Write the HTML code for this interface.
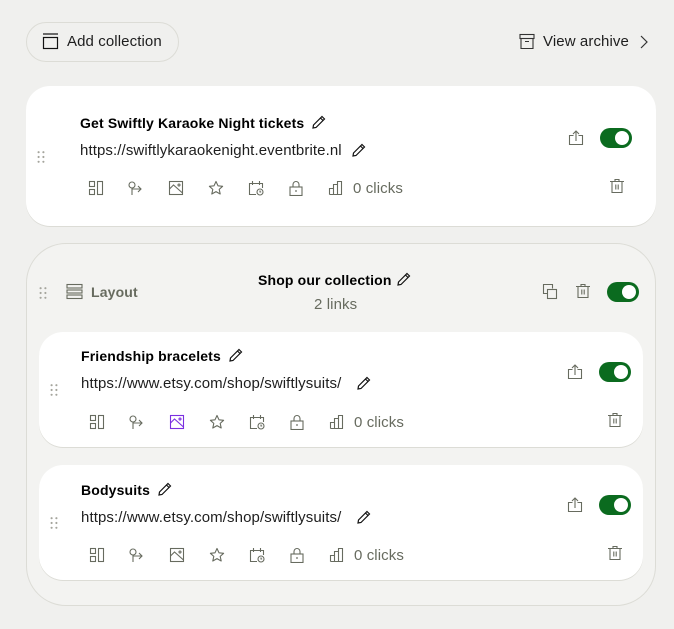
<!DOCTYPE html>
<html><head><meta charset="utf-8"><style>
*{margin:0;padding:0;box-sizing:border-box}
body{width:674px;height:629px;background:#f0f0ee;font-family:"Liberation Sans",sans-serif;position:relative;overflow:hidden;color:#000}
.a{position:absolute}
.card{position:absolute;background:#fff;border-radius:24px;box-shadow:0 1px 0 #dcdcd6}
.t{position:absolute;font-weight:bold;font-size:14px;white-space:nowrap;line-height:16px;letter-spacing:0.15px}
.u{position:absolute;font-size:15px;white-space:nowrap;line-height:16px;color:#1e1e1e;letter-spacing:0.1px}
.g{color:#676b5f}
svg.i{position:absolute;overflow:visible}
.tog{position:absolute;width:32px;height:20px;border-radius:10px;background:#0b6b1f}
.tog:after{content:"";position:absolute;right:3px;top:3px;width:14px;height:14px;border-radius:7px;background:#fff}
</style></head><body>
<svg width="0" height="0" style="position:absolute">
<defs>
<symbol id="dots" viewBox="0 0 6 10"><g fill="#a5a59d"><circle cx="1" cy="1" r=".9"/><circle cx="5" cy="1" r=".9"/><circle cx="1" cy="5" r=".9"/><circle cx="5" cy="5" r=".9"/><circle cx="1" cy="9" r=".9"/><circle cx="5" cy="9" r=".9"/></g></symbol>
<symbol id="pen" viewBox="0 0 16 16"><path d="M11 2.5l2.5 2.5L5 13.5 2 14l.5-3z M9.5 4l2.5 2.5" fill="none" stroke="#111" stroke-width="1.2"/></symbol>
<symbol id="lay" viewBox="0 0 16 16"><g fill="none" stroke="#676b5f" stroke-width="1.1"><rect x="1.5" y="1.5" width="5" height="5"/><rect x="1.5" y="9.5" width="5" height="5"/><rect x="9.5" y="1.5" width="5" height="13"/></g></symbol>
<symbol id="red" viewBox="0 0 16 16"><g fill="none" stroke="#676b5f" stroke-width="1.1"><circle cx="5" cy="5" r="3"/><path d="M5 8v7M5 9h9M11 6l3 3-3 3"/></g></symbol>
<symbol id="img" viewBox="0 0 16 16"><g fill="none" stroke="currentColor" stroke-width="1.1"><rect x="1.5" y="1.5" width="13" height="13"/><path d="M1.5 9l4-4 9 8"/><circle cx="11" cy="5" r="1"/></g></symbol>
<symbol id="star" viewBox="0 0 16 16"><path d="M8 1.5l2 4.3 4.6.5-3.4 3.1 1 4.6L8 11.6 3.8 14l1-4.6L1.4 6.3 6 5.8z" fill="none" stroke="#676b5f" stroke-width="1.1" stroke-linejoin="round"/></symbol>
<symbol id="cal" viewBox="0 0 16 16"><g fill="none" stroke="#676b5f" stroke-width="1.1"><path d="M8 14.5H1.5v-11h13V8M4.5 1v4M11.5 1v4"/><circle cx="12" cy="12" r="3"/><path d="M12 10.5V12h1.2"/></g></symbol>
<symbol id="lock" viewBox="0 0 16 16"><g fill="none" stroke="#676b5f" stroke-width="1.1"><rect x="2" y="7" width="12" height="8.5"/><path d="M5 7V4.5a3 3 0 016 0V7"/></g><circle cx="8" cy="11" r=".9" fill="#676b5f"/></symbol>
<symbol id="bar" viewBox="0 0 16 16"><g fill="none" stroke="#676b5f" stroke-width="1.1"><path d="M1.5 14.5V8.5h4v6M5.5 14.5V4.5h4v10M9.5 14.5V1.5h4v13H1.5"/></g></symbol>
<symbol id="share" viewBox="0 0 16 16"><g fill="none" stroke="#676b5f" stroke-width="1.1"><path d="M5.5 5.5h-4v9h13v-9h-4"/><path d="M8 11V1M5 4l3-3 3 3"/></g></symbol>
<symbol id="trash" viewBox="0 0 16 16"><g fill="none" stroke="#676b5f" stroke-width="1.1"><path d="M1 3.5h14M3 3.5v11h10v-11M6 3.5V1.5h4v2M6.8 6.5v5M9.2 6.5v5"/></g></symbol>
</defs></svg>

<div class="a" style="left:26px;top:22px;width:153px;height:40px;border:1px solid #dcdcd6;border-radius:20px"></div>
<svg class="i" style="left:42px;top:33px" width="17" height="17" viewBox="0 0 17 17"><g fill="none" stroke="#111" stroke-width="1.2"><path d="M1 1h15"/><rect x="1.5" y="4.5" width="14" height="11"/></g></svg>
<div class="u" style="left:67px;top:34px">Add collection</div>
<svg class="i" style="left:519px;top:33px" width="16" height="17" viewBox="0 0 16 17"><g fill="none" stroke="#333" stroke-width="1.1"><rect x="1" y="1.5" width="14" height="4"/><path d="M2 5.5v10h12v-10M6 8.5h4"/></g></svg>
<div class="u" style="left:543px;top:34px">View archive</div>
<svg class="i" style="left:639px;top:35px" width="10" height="14"><path d="M2 1l6 6-6 6" fill="none" stroke="#333" stroke-width="1.2"/></svg>

<div class="card" style="left:26px;top:86px;width:630px;height:140px"></div>
<svg class="i" style="left:37px;top:151px" width="8" height="12"><use href="#dots"/></svg>
<div class="t" style="left:80px;top:115px">Get Swiftly Karaoke Night tickets</div>
<svg class="i" style="left:311px;top:114px" width="16" height="16"><use href="#pen"/></svg>
<div class="u" style="left:80px;top:143px">https://swiftlykaraokenight.eventbrite.nl</div>
<svg class="i" style="left:351px;top:142px" width="16" height="16"><use href="#pen"/></svg>
<svg class="i" style="left:88px;top:180px" width="16" height="16"><use href="#lay"/></svg>
<svg class="i" style="left:127px;top:180px" width="16" height="16"><use href="#red"/></svg>
<svg class="i" style="left:168px;top:180px;color:#676b5f" width="16" height="16"><use href="#img"/></svg>
<svg class="i" style="left:208px;top:180px" width="16" height="16"><use href="#star"/></svg>
<svg class="i" style="left:248px;top:180px" width="16" height="16"><use href="#cal"/></svg>
<svg class="i" style="left:288px;top:180px" width="16" height="16"><use href="#lock"/></svg>
<svg class="i" style="left:328px;top:180px" width="16" height="16"><use href="#bar"/></svg>
<div class="u g" style="left:353px;top:181px">0 clicks</div>
<svg class="i" style="left:568px;top:130px" width="16" height="16"><use href="#share"/></svg>
<div class="tog" style="left:600px;top:128px"></div>
<svg class="i" style="left:609px;top:178px" width="16" height="16"><use href="#trash"/></svg>

<div class="a" style="left:26px;top:243px;width:630px;height:363px;background:#f3f3f1;border:1px solid #dcdcd6;border-radius:40px"></div>
<svg class="i" style="left:39px;top:287px" width="8" height="12"><use href="#dots"/></svg>
<svg class="i" style="left:66px;top:283px" width="17" height="17" viewBox="0 0 17 17"><g fill="none" stroke="#676b5f" stroke-width="1.1"><rect x="1" y="1.5" width="15" height="3.5"/><rect x="1" y="7" width="15" height="3"/><rect x="1" y="12" width="15" height="3.5"/></g></svg>
<div class="t g" style="left:91px;top:284px">Layout</div>
<div class="t" style="left:258px;top:272px">Shop our collection</div>
<svg class="i" style="left:396px;top:271px" width="16" height="16"><use href="#pen"/></svg>
<div class="u g" style="left:314px;top:297px">2 links</div>
<svg class="i" style="left:542px;top:283px" width="17" height="17" viewBox="0 0 17 17"><g fill="none" stroke="#676b5f" stroke-width="1.1"><path d="M10.5 5.5v-4h-9v9h4"/><rect x="5.5" y="6.5" width="9" height="9"/></g></svg>
<svg class="i" style="left:575px;top:283px" width="16" height="16"><use href="#trash"/></svg>
<div class="tog" style="left:607px;top:282px"></div>

<div class="card" style="left:39px;top:332px;width:604px;height:115px"></div>
<svg class="i" style="left:50px;top:384px" width="8" height="12"><use href="#dots"/></svg>
<div class="t" style="left:81px;top:348px">Friendship bracelets</div>
<svg class="i" style="left:228px;top:347px" width="16" height="16"><use href="#pen"/></svg>
<div class="u" style="left:81px;top:376px">https://www.etsy.com/shop/swiftlysuits/</div>
<svg class="i" style="left:356px;top:375px" width="16" height="16"><use href="#pen"/></svg>
<svg class="i" style="left:89px;top:414px" width="16" height="16"><use href="#lay"/></svg>
<svg class="i" style="left:128px;top:414px" width="16" height="16"><use href="#red"/></svg>
<svg class="i" style="left:169px;top:414px;color:#7b2fe0" width="16" height="16"><use href="#img"/></svg>
<svg class="i" style="left:209px;top:414px" width="16" height="16"><use href="#star"/></svg>
<svg class="i" style="left:249px;top:414px" width="16" height="16"><use href="#cal"/></svg>
<svg class="i" style="left:289px;top:414px" width="16" height="16"><use href="#lock"/></svg>
<svg class="i" style="left:329px;top:414px" width="16" height="16"><use href="#bar"/></svg>
<div class="u g" style="left:354px;top:415px">0 clicks</div>
<svg class="i" style="left:567px;top:364px" width="16" height="16"><use href="#share"/></svg>
<div class="tog" style="left:599px;top:362px"></div>
<svg class="i" style="left:607px;top:412px" width="16" height="16"><use href="#trash"/></svg>

<div class="card" style="left:39px;top:465px;width:604px;height:115px"></div>
<svg class="i" style="left:50px;top:517px" width="8" height="12"><use href="#dots"/></svg>
<div class="t" style="left:81px;top:482px">Bodysuits</div>
<svg class="i" style="left:157px;top:481px" width="16" height="16"><use href="#pen"/></svg>
<div class="u" style="left:81px;top:510px">https://www.etsy.com/shop/swiftlysuits/</div>
<svg class="i" style="left:356px;top:509px" width="16" height="16"><use href="#pen"/></svg>
<svg class="i" style="left:89px;top:547px" width="16" height="16"><use href="#lay"/></svg>
<svg class="i" style="left:128px;top:547px" width="16" height="16"><use href="#red"/></svg>
<svg class="i" style="left:169px;top:547px;color:#676b5f" width="16" height="16"><use href="#img"/></svg>
<svg class="i" style="left:209px;top:547px" width="16" height="16"><use href="#star"/></svg>
<svg class="i" style="left:249px;top:547px" width="16" height="16"><use href="#cal"/></svg>
<svg class="i" style="left:289px;top:547px" width="16" height="16"><use href="#lock"/></svg>
<svg class="i" style="left:329px;top:547px" width="16" height="16"><use href="#bar"/></svg>
<div class="u g" style="left:354px;top:548px">0 clicks</div>
<svg class="i" style="left:567px;top:497px" width="16" height="16"><use href="#share"/></svg>
<div class="tog" style="left:599px;top:495px"></div>
<svg class="i" style="left:607px;top:545px" width="16" height="16"><use href="#trash"/></svg>
</body></html>
